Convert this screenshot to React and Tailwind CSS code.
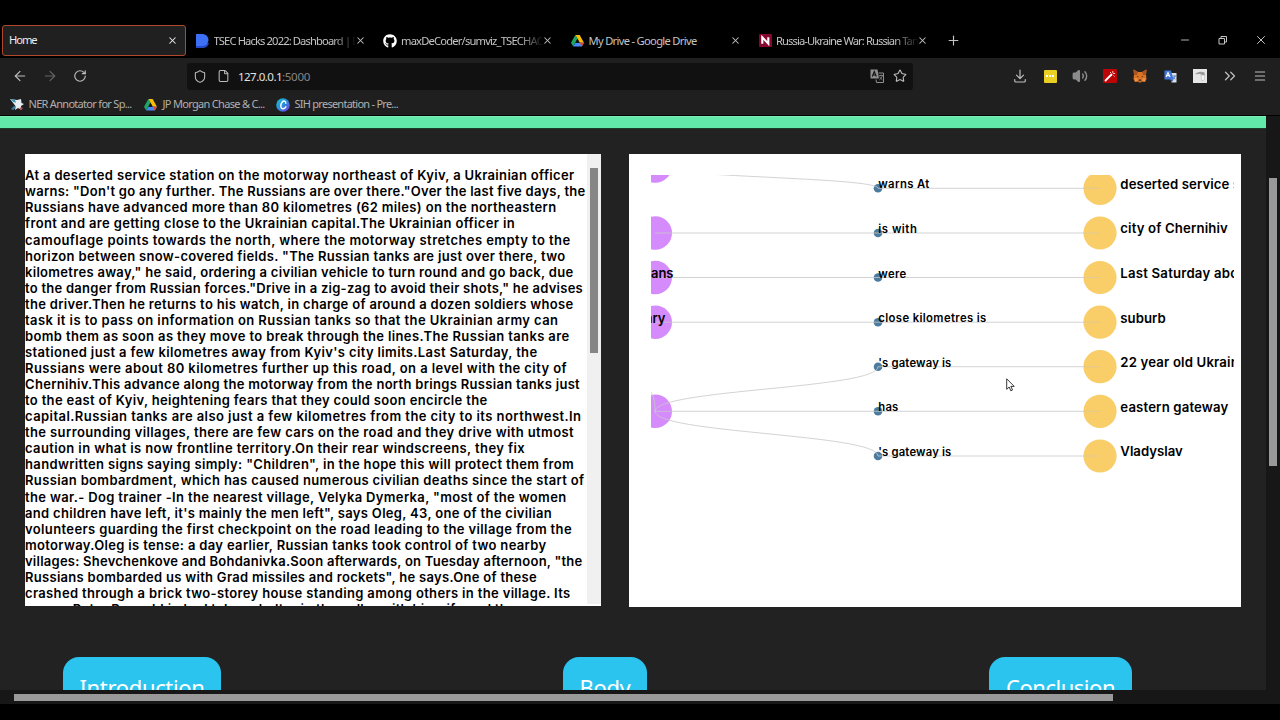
import React, { useLayoutEffect, useRef } from "react";
import { ArrowLeft, ArrowRight, RotateCw, X, Plus, Minus, Star, ChevronsRight, Menu, Volume2, Shield, File } from "lucide-react";
import { FaGithub } from "react-icons/fa";

/* Single line of text whose tracking is adjusted to fill a given width. */
function Fit({ width, children, className = "" }) {
  const ref = useRef(null);
  useLayoutEffect(() => {
    const el = ref.current;
    el.style.letterSpacing = "0px";
    const natural = el.getBoundingClientRect().width;
    el.style.letterSpacing = (width - natural) / children.length + "px";
  }, [width, children]);
  return (
    <span className="block shrink-0 whitespace-nowrap" style={{ width }}>
      <span ref={ref} className={"inline-block whitespace-pre " + className}>{children}</span>
    </span>
  );
}

function DriveIcon({ className }) {
  return (
    <svg viewBox="0 0 24 22" className={className}>
      <path d="M8 0h8l8 14h-8z" fill="#fbbc04" />
      <path d="M8 0l4 7-8 14-4-7z" fill="#1fa463" />
      <path d="M8 14h16l-4 7H4z" fill="#4688f4" />
      <path d="M16 14h8l-4 7z" fill="#ea4335" />
      <path d="M12 7l4 7H8z" fill="#111" />
    </svg>
  );
}

function DevfolioIcon() {
  return (
    <svg viewBox="0 0 13 14" className="h-[14px] w-[13px]">
      <path d="M0 10V14H6C10 14 12 12 13 9z" fill="#2549c8" />
      <path d="M0 0h6.5a6 6 0 0 1 0 12H0z" fill="#3c70f5" />
    </svg>
  );
}

function NewsIcon() {
  return (
    <svg viewBox="0 0 13 13" className="h-[13px] w-[13px]">
      <rect width="13" height="13" rx="1" fill="#86062c" />
      <path d="M3.3 9.8V3.3l6 6.3V3.2" fill="none" stroke="#fff" strokeWidth="2.1" />
    </svg>
  );
}

function BirdIcon() {
  return (
    <svg viewBox="0 0 14 14" className="h-[14px] w-[14px]">
      <path d="M0 1l7 1 4-1 .5 4 2.500 1-3 2 .5 4-3.500-2-3 2 .5-4z" fill="#e6eef2" />
      <path d="M0 1l5 .7 1 3-2.500-.7z" fill="#3c92ac" />
      <path d="M1 11l3.500-3.500 1 2.500-2.500 2z" fill="#377f9c" />
      <path d="M9.500 9.500l4 .5-3 2z" fill="#bb4d48" />
    </svg>
  );
}

function CanvaIcon() {
  return (
    <svg viewBox="0 0 14 14" className="h-[14px] w-[14px]">
      <defs>
        <linearGradient id="cv" x1="0" y1="0" x2="1" y2="1">
          <stop offset="0" stopColor="#10c3cf" />
          <stop offset=".5" stopColor="#2b8fdc" />
          <stop offset="1" stopColor="#7a2fe5" />
        </linearGradient>
      </defs>
      <circle cx="7" cy="7" r="6.8" fill="url(#cv)" />
      <path d="M9.8 5.2C10 2.800 7.600 2.400 6.100 4.200 4.300 6.300 4.200 10.700 6.900 10.800 8.300 10.800 9.300 9.900 9.900 8.800" fill="none" stroke="#fff" strokeWidth="1.4" strokeLinecap="round" />
    </svg>
  );
}

function FoxIcon() {
  return (
    <svg viewBox="0 0 14 14" className="h-[14px] w-[14px]">
      <path d="M.5.5L5 3h4L13.500.5 13 6l.5 4-1.500 3-3-.5-1 1H6l-1-1-3 .5L.5 10 1 6z" fill="#dd7423" />
      <path d="M.5.5L5 3 4 6 1 6zM13.500.5L9 3l1 3 3 0z" fill="#a85524" />
      <path d="M3.500 7l2 .5-.5 1zM10.500 7l-2 .5.5 1z" fill="#30312f" />
      <path d="M5.500 11l1-.8h1l1 .8-.5 1.200H6z" fill="#493f37" />
      <path d="M1.500 9.500L4 9l1 3-3 .5zM12.500 9.500L10 9l-1 3 3 .5z" fill="#ee8d43" />
    </svg>
  );
}

function WandIcon() {
  return (
    <svg viewBox="0 0 14 14" className="h-[14px] w-[14px]">
      <rect width="14" height="14" rx="1" fill="#bd0508" />
      <path d="M2.500 11.500L8.500 5.500" stroke="#fff" strokeWidth="1.800" strokeLinecap="round" />
      <path d="M9.800 2v2M12 4.500h-2M7 3l1 1M11.500 7.500l-1-1" stroke="#ffd9d9" strokeWidth=".9" />
    </svg>
  );
}

function DownloadIcon() {
  return (
    <svg viewBox="0 0 12 14" className="h-[14px] w-[12px]" fill="none" stroke="currentColor" strokeWidth="1.200" strokeLinecap="round" strokeLinejoin="round">
      <path d="M6 1v8.500M2.500 6.200L6 9.700l3.500-3.500M.7 10.500v1.200c0 .8.500 1.300 1.300 1.300h8c.8 0 1.300-.5 1.300-1.300v-1.200" />
    </svg>
  );
}

function TranslateOutline() {
  return (
    <svg viewBox="0 0 14 14" className="h-[14px] w-[14px]">
      <path d="M.5.5h7l1.500 9H.5z" fill="#909090" />
      <path d="M2.300 7.500L4.300 2.500 6.300 7.500M3 6h2.600" fill="none" stroke="#111" strokeWidth="1.100" />
      <path d="M8.500 4h5v9.500H6.500L6 10.500" fill="none" stroke="#909090" />
      <path d="M9 6.500h4M11 5.500v1M12.300 6.500c-.4 2-1.500 3.500-3 4.500M9.800 7.500c.5 1.500 1.200 2.500 2.600 3.500" fill="none" stroke="#909090" strokeWidth=".8" />
    </svg>
  );
}

function TranslateColor() {
  return (
    <svg viewBox="0 0 13 13" className="h-[13px] w-[13px]">
      <path d="M5 3h7.500v9.500H7.500z" fill="#dbe0e6" />
      <path d="M.5.5H7l2.500 9h-9z" fill="#3f74d8" />
      <path d="M2 7L4 2.500 6 7M2.800 5.600h2.500" fill="none" stroke="#fff" strokeWidth="1.100" />
      <path d="M8.500 6h3.500M11 6c-.3 1.500-1 2.500-2 3.300M9.300 7.300l2 2" fill="none" stroke="#4d78c4" strokeWidth=".9" />
      <path d="M6.500 9.500h3l-2 3z" fill="#2b56b3" />
    </svg>
  );
}

function SketchIcon() {
  return (
    <svg viewBox="0 0 14 14" className="h-[14px] w-[14px]">
      <rect width="14" height="14" fill="#e6e6e6" />
      <path d="M2 5.200C4 3 8 2 11.500 3.500L12 6H9L7 5z" fill="#9a9a9a" />
      <path d="M8 6.200h3.300v4.500L9 12z" fill="#fafafa" stroke="#b5b5b5" strokeWidth=".6" />
    </svg>
  );
}

const tabs = [
  { title: "TSEC Hacks 2022: Dashboard | D", icon: <DevfolioIcon />, width: 146, fade: true },
  { title: "maxDeCoder/sumviz_TSECHACK", icon: <FaGithub className="-ml-[1px] h-[14px] w-[14px] text-white" />, width: 148, fade: true },
  { title: "My Drive - Google Drive", icon: <DriveIcon className="h-[12px] w-[13px]" />, width: 108 },
  { title: "Russia-Ukraine War: Russian Tank", icon: <NewsIcon />, width: 147, fade: true },
];

function TabBar() {
  return (
    <div className="flex h-[58px] items-start bg-black pt-[25px] text-[11.200px] text-[#c4c4c4]">
      <div className="ml-[2px] flex h-[31px] w-[184px] items-center rounded-[3px] border border-[#b0482e] bg-[#202020] pl-[6px] text-[#ececec]">
        <Fit width={27.500}>Home</Fit>
        <X className="ml-auto mr-[7px] h-[11px] w-[11px]" strokeWidth={2.200} />
      </div>
      {tabs.map((t, i) => (
        <div key={i} className={"flex h-[31px] w-[187.500px] shrink-0 items-center pl-[8px] " + (i === 0 ? "ml-[2px]" : "")}>
          <div className="flex w-[17.500px] shrink-0 items-center">{t.icon}</div>
          <div className={"w-[141.500px] overflow-hidden pt-px " + (t.fade ? "[mask-image:linear-gradient(to_right,black_118px,transparent_143px)]" : "")}>
            <Fit width={t.width}>{t.title}</Fit>
          </div>
          <X className="-ml-[0.500px] h-[11px] w-[11px] shrink-0" strokeWidth={2.200} />
        </div>
      ))}
      <div className="flex h-[31px] flex-1 items-center pl-[8px]">
        <Plus className="h-[15px] w-[15px]" strokeWidth={1.800} />
        <div className="ml-auto flex items-center pb-px pr-[12px]">
          <Minus className="h-[12px] w-[12px]" strokeWidth={1.800} />
          <svg viewBox="0 0 10 10" className="ml-[27px] h-[10px] w-[10px]" fill="none" stroke="currentColor">
            <path d="M1 3.500h5.500V9H1zM3 3.500V1.500h5.500V7h-2" />
          </svg>
          <X className="ml-[26px] h-[14px] w-[14px]" strokeWidth={1.700} />
        </div>
      </div>
    </div>
  );
}

const extensions = [
  <DownloadIcon />,
  <div className="flex h-[13px] w-[13px] items-center justify-center gap-[1px] rounded-[1px] bg-[#ead023]">
    <i className="h-[2px] w-[2px] bg-white" /><i className="h-[2px] w-[2px] bg-white" /><i className="h-[2px] w-[2px] bg-white" />
  </div>,
  <Volume2 className="h-[16px] w-[16px] text-[#8c8c8c] [&>path:first-child]:fill-[#8c8c8c]" strokeWidth={2.200} />,
  <WandIcon />,
  <FoxIcon />,
  <TranslateColor />,
  <SketchIcon />,
  <ChevronsRight className="h-[18px] w-[18px]" strokeWidth={1.700} />,
  <Menu className="h-[14px] w-[14px]" strokeWidth={1.800} />,
];

function Toolbar() {
  return (
    <div className="flex h-[36px] items-center pl-[5px] text-[#bdbdbd]">
      <div className="flex w-[182px] items-center">
        <div className="flex w-[30px] justify-center"><ArrowLeft className="h-[16px] w-[16px]" strokeWidth={1.700} /></div>
        <div className="flex w-[30px] justify-center text-[#666]"><ArrowRight className="h-[16px] w-[16px]" strokeWidth={1.700} /></div>
        <div className="flex w-[30px] justify-center"><RotateCw className="h-[14px] w-[14px]" strokeWidth={2} /></div>
      </div>
      <div className="flex h-[27px] w-[726px] items-center rounded-[3px] bg-[#111] pl-[6px] pr-[6px]">
        <Shield className="h-[15px] w-[14px]" strokeWidth={1.800} />
        <File className="ml-[10px] h-[14px] w-[13px]" strokeWidth={1.900} />
        <div className="ml-[8px] flex pt-px text-[11.600px]">
          <Fit width={44} className="text-[#e2e2e2]">127.0.0.1</Fit>
          <Fit width={28} className="text-[#858585]">:5000</Fit>
        </div>
        <div className="ml-auto flex items-center gap-[9px]">
          <TranslateOutline />
          <Star className="h-[14px] w-[14px]" strokeWidth={1.900} />
        </div>
      </div>
      <div className="ml-auto flex pr-[5px]">
        {extensions.map((e, i) => (
          <div key={i} className="flex w-[30px] items-center justify-center">{e}</div>
        ))}
      </div>
    </div>
  );
}

function Bookmarks() {
  return (
    <div className="flex h-[21px] items-center pl-[10px] text-[11px] text-[#b0b0b0]">
      <BirdIcon />
      <div className="ml-[4.500px] w-[115.500px]"><Fit width={103}>NER Annotator for Sp...</Fit></div>
      <DriveIcon className="h-[12px] w-[13px]" />
      <div className="ml-[5.500px] w-[113.500px]"><Fit width={102}>JP Morgan Chase &amp; C...</Fit></div>
      <CanvaIcon />
      <div className="ml-[4.500px]"><Fit width={103.500}>SIH presentation - Pre...</Fit></div>
    </div>
  );
}

/* [text, width in px] */
const article = [
  ["At a deserted service station on the motorway northeast of Kyiv, a Ukrainian officer", 549.5],
  ["warns: \"Don't go any further. The Russians are over there.\"Over the last five days, the", 560.5],
  ["Russians have advanced more than 80 kilometres (62 miles) on the northeastern", 531.5],
  ["front and are getting close to the Ukrainian capital.The Ukrainian officer in", 490],
  ["camouflage points towards the north, where the motorway stretches empty to the", 545.5],
  ["horizon between snow-covered fields. \"The Russian tanks are just over there, two", 540.5],
  ["kilometres away,\" he said, ordering a civilian vehicle to turn round and go back, due", 548.5],
  ["to the danger from Russian forces.\"Drive in a zig-zag to avoid their shots,\" he advises", 558],
  ["the driver.Then he returns to his watch, in charge of around a dozen soldiers whose", 548.5],
  ["task it is to pass on information on Russian tanks so that the Ukrainian army can", 533.5],
  ["bomb them as soon as they move to break through the lines.The Russian tanks are", 544.5],
  ["stationed just a few kilometres away from Kyiv's city limits.Last Saturday, the", 512.5],
  ["Russians were about 80 kilometres further up this road, on a level with the city of", 542],
  ["Chernihiv.This advance along the motorway from the north brings Russian tanks just", 555],
  ["to the east of Kyiv, heightening fears that they could soon encircle the", 462.5],
  ["capital.Russian tanks are also just a few kilometres from the city to its northwest.In", 556.5],
  ["the surrounding villages, there are few cars on the road and they drive with utmost", 549],
  ["caution in what is now frontline territory.On their rear windscreens, they fix", 500],
  ["handwritten signs saying simply: \"Children\", in the hope this will protect them from", 549],
  ["Russian bombardment, which has caused numerous civilian deaths since the start of", 559.5],
  ["the war.- Dog trainer -In the nearest village, Velyka Dymerka, \"most of the women", 541.5],
  ["and children have left, it's mainly the men left\", says Oleg, 43, one of the civilian", 527],
  ["volunteers guarding the first checkpoint on the road leading to the village from the", 547],
  ["motorway.Oleg is tense: a day earlier, Russian tanks took control of two nearby", 521.5],
  ["villages: Shevchenkove and Bohdanivka.Soon afterwards, on Tuesday afternoon, \"the", 557.5],
  ["Russians bombarded us with Grad missiles and rockets\", he says.One of these", 512],
  ["crashed through a brick two-storey house standing among others in the village. Its", 545.5],
  ["owner, Petro Bonezhkin had taken shelter in the cellar with his wife and the", 491],
];

function ArticlePanel() {
  return (
    <section className="flex h-[452px] w-[576px] overflow-hidden bg-white">
      <div className="h-full w-[562px] overflow-hidden pt-[13.300px] font-[Inter,sans-serif] text-[13px] font-semibold leading-[16.070px] text-black">
        {article.map(([t, w], i) => <Fit key={i} width={w}>{t}</Fit>)}
      </div>
      <div className="flex h-[450px] w-[14px] justify-center bg-[#f0f0f0] pt-[14px]">
        <div className="h-[185px] w-[8px] bg-[#868686]" />
      </div>
    </section>
  );
}

const rows = [
  { y: 188.300, verb: "warns At", vw: 51, object: "deserted service station", ow: 157 },
  { y: 233, verb: "is with", vw: 38.500, object: "city of Chernihiv", ow: 107.500 },
  { y: 277.500, verb: "were", vw: 28, object: "Last Saturday about", ow: 131 },
  { y: 322.200, verb: "close kilometres is", vw: 108, object: "suburb", ow: 45.500 },
  { y: 366.700, verb: "'s gateway is", vw: 73, object: "22 year old Ukrainian", ow: 138 },
  { y: 411.300, verb: "has", vw: 20, object: "eastern gateway", ow: 108 },
  { y: 456, verb: "'s gateway is", vw: 73, object: "Vladyslav", ow: 62.500 },
];
const subjects = [166, 233, 277.500, 322.200, 411.300];
const curves = [[166, 188.300], [411.300, 366.700], [411.300, 456]];

function GraphPanel() {
  return (
    <section className="h-[453px] w-[612px] bg-white pl-[22px] pt-[21px]">
      <svg viewBox="651 175 583 420" className="block h-[420px] w-[583px] overflow-hidden font-[Inter,sans-serif] font-semibold">
        {subjects.map((y) => <circle key={y} cx="655.3" cy={y} r="16.700" fill="#d58bfb" />)}
        {rows.map((r) => (
          <g key={r.y}>
            <circle cx="1100" cy={r.y} r="16.600" fill="#f9cd67" />
            <circle cx="878" cy={r.y} r="4.300" fill="#4b7c9f" />
          </g>
        ))}
        <g fill="none" stroke="#c8c8c8" strokeOpacity=".8">
          {rows.map((r, i) => <path key={i} d={"M878 " + r.y + "H1084"} />)}
          {rows.map((r, i) => <path key={i} d={"M1084 " + r.y + "H1100"} strokeOpacity=".45" />)}
          {[1, 2, 3, 5].map((i) => <path key={i} d={"M655 " + rows[i].y + "H878"} />)}
          {curves.map(([a, b], i) => {
            const m = (a + b) / 2;
            return <path key={i} d={"M655 " + a + "C655 " + m + " 878 " + m + " 878 " + b} />;
          })}
          <path d="M655 411.300C655 402 654 396 650 391" />
        </g>
        <g fill="#000">
          {rows.map((r) => (
            <g key={r.y}>
              <text x="878.300" y={r.y + 0.1} fontSize="11.300" textLength={r.vw}>{r.verb}</text>
              <text x="1120.300" y={r.y + 0.3} fontSize="13.200" textLength={r.ow}>{r.object}</text>
            </g>
          ))}
          <text x="673.500" y="278" fontSize="13" textAnchor="end">Russians</text>
          <text x="665.500" y="322.700" fontSize="13" textAnchor="end">military</text>
        </g>
      </svg>
    </section>
  );
}

function SectionButton({ width, textWidth, className, children }) {
  return (
    <button className={"flex h-[64px] shrink-0 justify-center rounded-[16px] bg-[#2bc4ef] pt-[14px] text-[22px] leading-[33px] text-white " + className} style={{ width }}>
      <Fit width={textWidth}>{children}</Fit>
    </button>
  );
}

export default function App() {
  return (
    <div className="relative flex h-[720px] w-[1280px] flex-col overflow-hidden bg-black font-['Noto_Sans','Open_Sans',sans-serif]">
      <TabBar />
      <header className="h-[58px] shrink-0 border-b border-black bg-[#1f1f1f]">
        <Toolbar />
        <Bookmarks />
      </header>
      <div className="flex h-[574px] shrink-0">
        <main className="h-[574px] w-[1266px] overflow-hidden bg-[#222]">
          <div className="h-[13px] border-b border-t border-b-[#183b2a] border-t-[#7cecb8] bg-[#62e9aa]" />
          <div className="flex gap-[28px] pl-[25px] pt-[25px]">
            <ArticlePanel />
            <GraphPanel />
          </div>
          <div className="flex pl-[63px] pt-[50px]">
            <SectionButton width={158} textWidth={125} className="">Introduction</SectionButton>
            <SectionButton width={84} textWidth={51} className="ml-[342px]">Body</SectionButton>
            <SectionButton width={143} textWidth={109} className="ml-[342px]">Conclusion</SectionButton>
          </div>
        </main>
        <div className="flex w-[14px] justify-center bg-[#171717] pt-[62px]">
          <div className="h-[288px] w-[8px] bg-[#999]" />
        </div>
      </div>
      <div className="flex h-[14px] shrink-0 items-center bg-[#171717] pl-[14px]">
        <div className="h-[7px] w-[1099px] bg-[#999]" />
      </div>
      <svg viewBox="0 0 9 14" className="absolute left-[1006px] top-[378px] h-[14px] w-[9px]">
        <path d="M.7.8v10.500l2.500-2.300 1.600 3.800 1.700-.8-1.600-3.600h3.300z" fill="#fff" stroke="#222" strokeWidth=".9" />
      </svg>
    </div>
  );
}
